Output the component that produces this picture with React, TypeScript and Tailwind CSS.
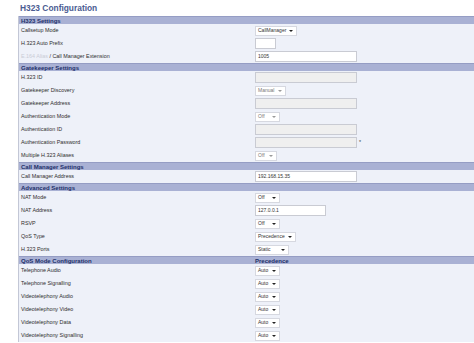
import React from 'react'

type Field =
  | { kind: 'select'; value: string; width: number; disabled?: boolean }
  | { kind: 'input'; value?: string; width: number; disabled?: boolean; star?: boolean }

type Row = { label: React.ReactNode; field: Field }

type Section = { title: string; extra?: string; rows: Row[] }

const sections: Section[] = [
  {
    title: 'H323 Settings',
    rows: [
      { label: 'Callsetup Mode', field: { kind: 'select', value: 'CallManager', width: 42 } },
      { label: 'H.323 Auto Prefix', field: { kind: 'input', width: 21 } },
      {
        label: (
          <>
            <span className="text-[#c9ccd6]">E.164 Alias</span> / Call Manager Extension
          </>
        ),
        field: { kind: 'input', value: '1005', width: 102 },
      },
    ],
  },
  {
    title: 'Gatekeeper Settings',
    rows: [
      { label: 'H.323 ID', field: { kind: 'input', width: 102, disabled: true } },
      { label: 'Gatekeeper Discovery', field: { kind: 'select', value: 'Manual', width: 31, disabled: true } },
      { label: 'Gatekeeper Address', field: { kind: 'input', width: 102, disabled: true } },
      { label: 'Authentication Mode', field: { kind: 'select', value: 'Off', width: 25, disabled: true } },
      { label: 'Authentication ID', field: { kind: 'input', width: 102, disabled: true } },
      { label: 'Authentication Password', field: { kind: 'input', width: 102, disabled: true, star: true } },
      { label: 'Multiple H.323 Aliases', field: { kind: 'select', value: 'Off', width: 22, disabled: true } },
    ],
  },
  {
    title: 'Call Manager Settings',
    rows: [
      { label: 'Call Manager Address', field: { kind: 'input', value: '192.168.15.35', width: 102 } },
    ],
  },
  {
    title: 'Advanced Settings',
    rows: [
      { label: 'NAT Mode', field: { kind: 'select', value: 'Off', width: 25 } },
      { label: 'NAT Address', field: { kind: 'input', value: '127.0.0.1', width: 71 } },
      { label: 'RSVP', field: { kind: 'select', value: 'Off', width: 25 } },
      { label: 'QoS Type', field: { kind: 'select', value: 'Precedence', width: 41 } },
      { label: 'H.323 Ports', field: { kind: 'select', value: 'Static', width: 34 } },
    ],
  },
  {
    title: 'QoS Mode Configuration',
    extra: 'Precedence',
    rows: [
      'Telephone Audio',
      'Telephone Signalling',
      'Videotelephony Audio',
      'Videotelephony Video',
      'Videotelephony Data',
      'Videotelephony Signalling',
    ].map((l) => ({ label: l, field: { kind: 'select', value: 'Auto', width: 25 } as Field })),
  },
]

function Control({ field }: { field: Field }) {
  if (field.kind === 'select') {
    return (
      <div
        className={`relative h-[10px] border border-[#d6d8e0] bg-white flex items-center pl-[2px] text-[5px] ${
          field.disabled ? 'text-[#777]' : 'text-[#333]'
        }`}
        style={{ width: field.width }}
      >
        <span className="leading-none">{field.value}</span>
        <span
          className={`absolute right-[3px] top-[3px] w-0 h-0 border-l-[2px] border-r-[2px] border-t-[2px] border-l-transparent border-r-transparent ${
            field.disabled ? 'border-t-[#9a9a9a]' : 'border-t-[#222]'
          }`}
        />
      </div>
    )
  }
  return (
    <div className="flex items-center">
      <div
        className={`h-[11px] border border-[#c9cbd3] flex items-center pl-[2px] text-[5px] text-[#333] ${
          field.disabled ? 'bg-[#efefef]' : 'bg-white'
        }`}
        style={{ width: field.width }}
      >
        <span className="leading-none">{field.value}</span>
      </div>
      {field.star && <span className="ml-[2px] text-[#444] leading-none">*</span>}
    </div>
  )
}

export default function App() {
  return (
    <div
      className="w-[474px] h-[343px] overflow-hidden bg-white"
      style={{ fontFamily: '"Liberation Sans", Arial, sans-serif' }}
    >
      <div className="h-[16px] pl-[20px] flex items-center">
        <h1 className="text-[8.4px] font-bold text-[#4b5c92] leading-none">H323 Configuration</h1>
      </div>
      <div className="ml-[18px] border-l border-[#c3c7d6] bg-[#eef1f9] text-[5.4px] text-[#2e2e2e]">
        {sections.map((s) => (
          <div key={s.title}>
            <div className="h-[8px] bg-[#a9b1d4] border-t border-[#959dc4] flex items-center text-[6px] font-bold text-[#22306a]">
              <div className="w-[236px] pl-[2px] leading-none">{s.title}</div>
              {s.extra && <div className="leading-none">{s.extra}</div>}
            </div>
            {s.rows.map((r, i) => (
              <div key={i} className="h-[13px] flex items-center">
                <div className="w-[236px] pl-[2px] leading-none">{r.label}</div>
                <Control field={r.field} />
              </div>
            ))}
          </div>
        ))}
      </div>
    </div>
  )
}
